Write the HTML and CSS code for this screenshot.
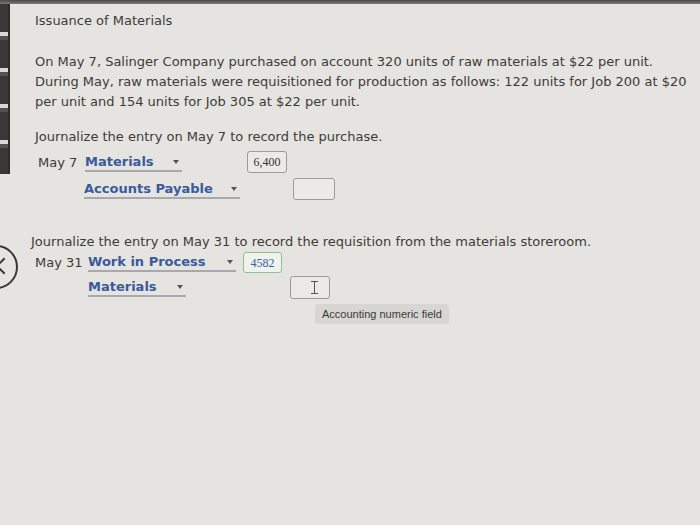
FILE: index.html
```html
<!DOCTYPE html>
<html>
<head>
<meta charset="utf-8">
<link rel="stylesheet" href="styles.css">
</head>
<body>
<div class="topbar"></div>
<div class="screen">
  <div class="edge"><div class="strip"></div></div>
  <div class="content">
    <h1 class="title">Issuance of Materials</h1>
    <p class="para">On May 7, Salinger Company purchased on account 320 units of raw materials at $22 per unit. During May, raw materials were requisitioned for production as follows: 122 units for Job 200 at $20 per unit and 154 units for Job 305 at $22 per unit.</p>

    <p class="prompt p1">Journalize the entry on May 7 to record the purchase.</p>
    <div class="entry e1">
      <div class="row">
        <span class="date">May 7</span>
        <span class="dd w-mat1">Materials<span class="arrow"></span></span>
        <span class="box debit1">6,400</span>
      </div>
      <div class="row r2">
        <span class="dd w-ap">Accounts Payable<span class="arrow"></span></span>
        <span class="box credit1"></span>
      </div>
    </div>

    <p class="prompt p2">Journalize the entry on May 31 to record the requisition from the materials storeroom.</p>
    <div class="entry e2">
      <div class="row">
        <span class="date">May 31</span>
        <span class="dd w-wip">Work in Process<span class="arrow"></span></span>
        <span class="box green debit2">4582</span>
      </div>
      <div class="row r2b">
        <span class="dd w-mat2">Materials<span class="arrow"></span></span>
        <span class="box credit2"><span class="ibeam"></span></span>
      </div>
      <div class="tiprow"><span class="tip">Accounting numeric field</span></div>
    </div>
  </div>
</div>
<div class="circle"><span class="chev"></span></div>
</body>
</html>
```
FILE: styles.css
```css
html, body {
  margin: 0;
  padding: 0;
  background: #e5e4e0;
  height: 525px;
  overflow: hidden;
}
body {
  font-family: "DejaVu Sans", Verdana, sans-serif;
  color: #3d3b39;
  position: relative;
}
.topbar {
  height: 4px;
  background: linear-gradient(#4a4a4c, #7a7a7a);
}
.screen {
  display: flex;
}
.edge {
  width: 10px;
  flex: none;
}
.strip {
  height: 170px;
  background: repeating-linear-gradient(#3a3836 0 28px, #d8d8d8 28px 32px, #55524f 32px 36px);
  border-right: 2px solid #2e2c2a;
  width: 8px;
}
.content {
  padding-left: 25px;
  flex: 1;
}
.title {
  font-size: 13px;
  font-weight: normal;
  margin: 8px 0 0 0;
  line-height: 18px;
}
.para {
  font-size: 13px;
  line-height: 20px;
  margin: 22px 0 0 0;
  width: 665px;
}
.prompt {
  font-size: 13px;
  line-height: 18px;
  margin: 0;
}
.p1 { margin-top: 16px; }
.p2 { margin-top: 32px; margin-left: -4px; }
.entry .row {
  display: flex;
  align-items: center;
  height: 24px;
}
.e1 { margin-top: 4px; margin-left: 3px; }
.e2 { margin-top: -1px; }
.date {
  font-size: 13px;
  width: 47px;
  flex: none;
}
.e2 .date { width: 53px; }
.dd {
  position: relative;
  font-weight: bold;
  font-size: 13px;
  color: #3a5a9c;
  border-bottom: 2px solid #a8a8ad;
  line-height: 17px;
  box-sizing: border-box;
  flex: none;
}
.arrow {
  position: absolute;
  right: 3px;
  top: 7px;
  width: 0;
  height: 0;
  border-left: 3px solid transparent;
  border-right: 3px solid transparent;
  border-top: 4px solid #555;
}
.w-mat1 { width: 97px; }
.w-ap { width: 156px; margin-left: 46px; }
.w-wip { width: 148px; }
.w-mat2 { width: 98px; margin-left: 53px; }
.box {
  flex: none;
  box-sizing: border-box;
  height: 22px;
  border: 1px solid #9c9b99;
  border-radius: 3px;
  background: #eceae6;
  font-family: "Liberation Serif", "Times New Roman", serif;
  font-size: 12px;
  color: #333;
  text-align: center;
  line-height: 20px;
  position: relative;
}
.debit1 { width: 40px; margin-left: 65px; }
.credit1 { width: 42px; margin-left: 53px; }
.r2 { margin-top: 3px; }
.green {
  border-color: #8fc08f;
  background: #eef3ec;
  color: #3561a8;
}
.debit2 { width: 39px; margin-left: 7px; height: 21px; }
.credit2 { width: 40px; margin-left: 104px; height: 23px; }
.r2b { margin-top: 1px; }
.ibeam {
  position: absolute;
  left: 23px;
  top: 4px;
  width: 1px;
  height: 13px;
  background: #555;
}
.ibeam::before, .ibeam::after {
  content: "";
  position: absolute;
  left: -3px;
  width: 7px;
  height: 1px;
  background: #555;
}
.ibeam::before { top: 0; }
.ibeam::after { bottom: 0; }
.tiprow {
  padding-left: 280px;
  margin-top: 4px;
}
.tip {
  display: inline-block;
  background: #d7d6d2;
  border-radius: 3px;
  font-family: "Liberation Sans", Arial, sans-serif;
  font-size: 11px;
  color: #3a3a3a;
  padding: 3px 7px;
  line-height: 14px;
}
.circle {
  position: absolute;
  left: -26px;
  top: 245px;
  width: 40px;
  height: 40px;
  border: 2px solid #3a3836;
  border-radius: 50%;
}
.chev {
  position: absolute;
  left: 22px;
  top: 13px;
  width: 10px;
  height: 10px;
  border-left: 2px solid #3a3836;
  border-bottom: 2px solid #3a3836;
  transform: rotate(45deg);
}
```
